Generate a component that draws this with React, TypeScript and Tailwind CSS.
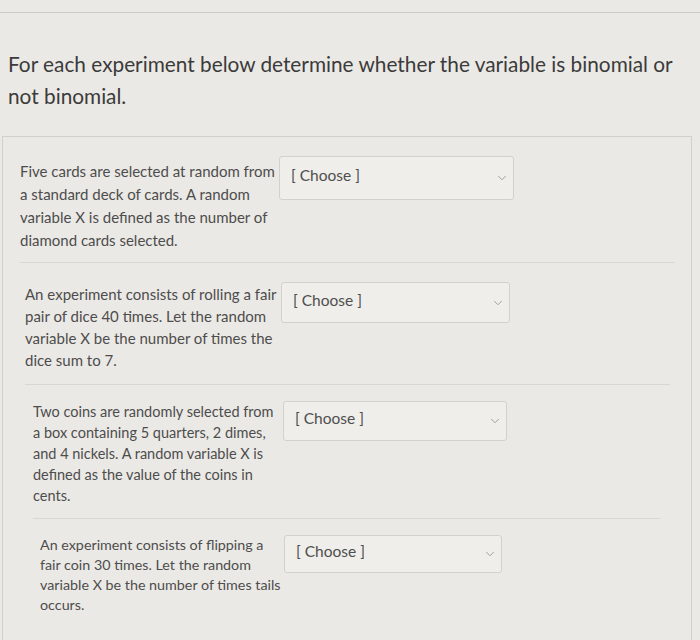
import { ChevronDown } from 'lucide-react';

const ROWS = [
  {
    lines: ['Five cards are selected at random from', 'a standard deck of cards. A random', 'variable X is defined as the number of', 'diamond cards selected.'],
    row: 'ml-[17px] mr-[16px] pt-[19px] pb-[10px] border-b',
    text: 'w-[259px] pt-[4px] text-[15px] leading-[23px]',
    select: 'w-[235px] h-[44px]',
  },
  {
    lines: ['An experiment consists of rolling a fair', 'pair of dice 40 times. Let the random', 'variable X be the number of times the', 'dice sum to 7.'],
    row: 'ml-[22px] mr-[21px] pt-[19px] pb-[13px] border-b',
    text: 'w-[256px] pt-[1px] text-[15px] leading-[22px]',
    select: 'w-[229px] h-[41px]',
  },
  {
    lines: ['Two coins are randomly selected from', 'a box containing 5 quarters, 2 dimes,', 'and 4 nickels. A random variable X is', 'defined as the value of the coins in', 'cents.'],
    row: 'ml-[30px] mr-[31px] pt-[16px] pb-[12px] border-b',
    text: 'w-[250px] text-[14.5px] leading-[21px]',
    select: 'w-[224px] h-[40px]',
  },
  {
    lines: ['An experiment consists of flipping a', 'fair coin 30 times. Let the random', 'variable X be the number of times tails', 'occurs.'],
    row: 'ml-[37px] mr-[36px] pt-[16px] pb-[12px]',
    text: 'w-[244px] text-[14.3px] leading-[20px]',
    select: 'w-[218px] h-[38px]',
  },
];

function ChooseBox({ size }: { size: string }) {
  return (
    <div className={`${size} flex items-center justify-between pl-[11px] pr-[4px] rounded-[3px] border border-[#d3d1cd] bg-[#efeeea]`}>
      <span className="text-[15.5px] text-[#4e4e4e] -mt-[4px]">[ Choose ]</span>
      <ChevronDown className="w-[14px] h-[14px] text-[#9a9a9a]" strokeWidth={1.6} />
    </div>
  );
}

export default function App() {
  return (
    <div className="w-[700px] h-[640px] overflow-hidden bg-[#ebe9e5] font-['Lato','Liberation_Sans',sans-serif]">
      <div className="h-[13px] border-b border-[#cbc9c5]" />

      {/* Question text */}
      <div className="pt-[35px] pb-[24px] pl-[8px] text-[20.8px] leading-[32px] text-[#3b3b3b]">
        <p>For each experiment below determine whether the variable is binomial or</p>
        <p>not binomial.</p>
      </div>

      {/* Answer panel */}
      <div className="ml-[2px] mr-[8px] h-full border-t border-l border-r border-[#d2d0cc]">
        {ROWS.map((r, i) => (
          <div key={i} className={`${r.row} border-[#d9d7d3] flex items-start`}>
            <div className={`${r.text} text-[#4d4d4d]`}>
              {r.lines.map((l, j) => (
                <div key={j} className="whitespace-nowrap">{l}</div>
              ))}
            </div>
            <ChooseBox size={r.select} />
          </div>
        ))}
      </div>
    </div>
  );
}
